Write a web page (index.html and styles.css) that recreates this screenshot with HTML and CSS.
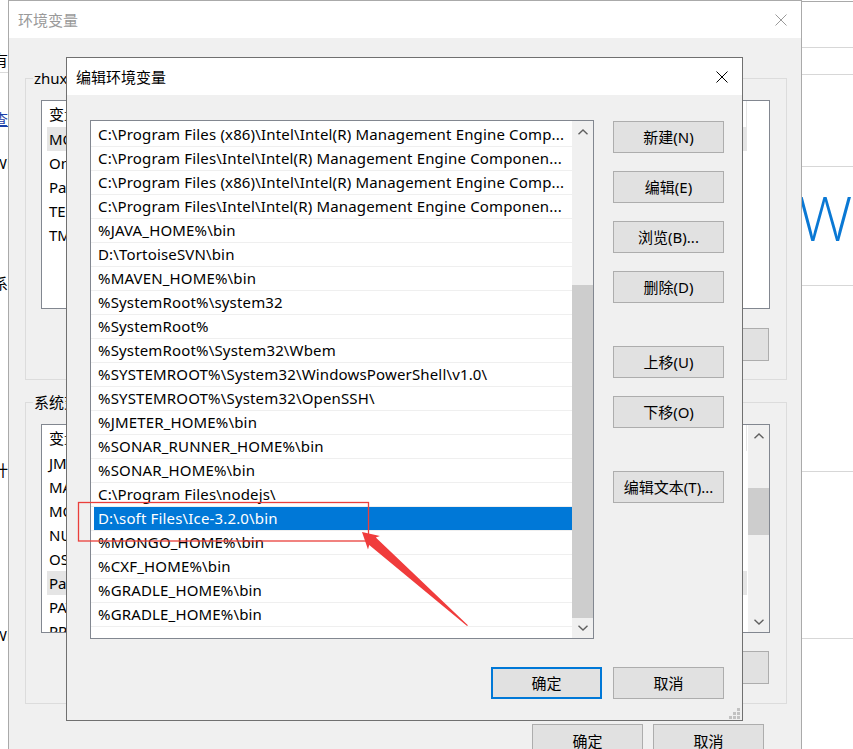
FILE: index.html
```html
<!DOCTYPE html>
<html lang="zh-CN">
<head>
<meta charset="utf-8">
<title>编辑环境变量</title>
<link rel="stylesheet" href="styles.css">
</head>
<body>
<div class="backapp">
  <div class="back-left">
    <div class="bl bl-1">有</div>
    <div class="bl bl-2 link">查</div>
    <div class="bl bl-3">Wi</div>
    <div class="bl bl-4">系</div>
    <div class="bl bl-5">计</div>
    <div class="bl bl-6">Wi</div>
  </div>
  <div class="back-right">
    <div class="br br-1"></div>
    <div class="br br-2"></div>
    <div class="br br-3"></div>
    <div class="br br-4"><span class="brand">Windows</span></div>
    <div class="br br-5"></div>
    <div class="br br-6"></div>
    <div class="br br-7"></div>
  </div>
</div>

<div class="win env">
  <div class="titlebar env-title">
    <span class="title">环境变量</span>
    <svg class="xbtn" width="12" height="12" viewBox="0 0 12 12"><path d="M0.5 0.5L11.5 11.5M11.5 0.5L0.5 11.5" stroke="#9a9a9a" stroke-width="1" fill="none"/></svg>
  </div>
  <div class="env-body">
    <fieldset class="group g1">
      <legend>zhuxiaoming 的用户变量(U)</legend>
      <div class="lv">
        <div class="lv-main">
          <div class="lv-head"><span class="lv-col">变量</span><span class="lv-col2"></span></div>
          <div class="lv-row hl">MOZ_PLUGIN_PATH</div>
          <div class="lv-row">OneDrive</div>
          <div class="lv-row">Path</div>
          <div class="lv-row">TEMP</div>
          <div class="lv-row">TMP</div>
        </div>
      </div>
      <div class="btnrow">
        <button class="btn">新建(N)...</button>
        <button class="btn">编辑(E)...</button>
        <button class="btn">删除(D)</button>
      </div>
    </fieldset>
    <fieldset class="group g2">
      <legend>系统变量(S)</legend>
      <div class="lv">
        <div class="lv-main">
          <div class="lv-head"><span class="lv-col">变量</span><span class="lv-col2"></span></div>
          <div class="lv-row">JMETER_HOME</div>
          <div class="lv-row">MAVEN_HOME</div>
          <div class="lv-row">MONGO_HOME</div>
          <div class="lv-row">NUMBER_OF_PROCESSORS</div>
          <div class="lv-row">OS</div>
          <div class="lv-row hl">Path</div>
          <div class="lv-row">PATHEXT</div>
          <div class="lv-row">PROCESSOR_ARCHITECTURE</div>
        </div>
        <div class="vscroll small">
          <div class="sb-btn up"><svg width="10" height="6" viewBox="0 0 10 6"><path d="M0.5 5.3L5 1L9.5 5.3" stroke="#606060" stroke-width="1.4" fill="none"/></svg></div>
          <div class="sb-gap"></div>
          <div class="sb-thumb"></div>
          <div class="sb-rest"></div>
          <div class="sb-btn down"><svg width="10" height="6" viewBox="0 0 10 6"><path d="M0.5 0.7L5 5L9.5 0.7" stroke="#606060" stroke-width="1.4" fill="none"/></svg></div>
        </div>
      </div>
      <div class="btnrow">
        <button class="btn">新建(W)...</button>
        <button class="btn">编辑(I)...</button>
        <button class="btn">删除(L)</button>
      </div>
    </fieldset>
    <div class="env-foot">
      <button class="btn">确定</button>
      <button class="btn">取消</button>
    </div>
  </div>
</div>

<div class="win dlg">
  <div class="titlebar dlg-title">
    <span class="title">编辑环境变量</span>
    <svg class="xbtn" width="12" height="12" viewBox="0 0 12 12"><path d="M0.5 0.5L11.5 11.5M11.5 0.5L0.5 11.5" stroke="#000" stroke-width="1" fill="none"/></svg>
  </div>
  <div class="dlg-body">
    <div class="dlg-main">
      <div class="pathlist">
        <div class="rows">
          <div class="prow">C:\Program Files (x86)\Intel\Intel(R) Management Engine Comp...</div>
          <div class="prow">C:\Program Files\Intel\Intel(R) Management Engine Componen...</div>
          <div class="prow">C:\Program Files (x86)\Intel\Intel(R) Management Engine Comp...</div>
          <div class="prow">C:\Program Files\Intel\Intel(R) Management Engine Componen...</div>
          <div class="prow">%JAVA_HOME%\bin</div>
          <div class="prow">D:\TortoiseSVN\bin</div>
          <div class="prow">%MAVEN_HOME%\bin</div>
          <div class="prow">%SystemRoot%\system32</div>
          <div class="prow">%SystemRoot%</div>
          <div class="prow">%SystemRoot%\System32\Wbem</div>
          <div class="prow">%SYSTEMROOT%\System32\WindowsPowerShell\v1.0\</div>
          <div class="prow">%SYSTEMROOT%\System32\OpenSSH\</div>
          <div class="prow">%JMETER_HOME%\bin</div>
          <div class="prow">%SONAR_RUNNER_HOME%\bin</div>
          <div class="prow">%SONAR_HOME%\bin</div>
          <div class="prow">C:\Program Files\nodejs\</div>
          <div class="prow sel">D:\soft Files\Ice-3.2.0\bin</div>
          <div class="prow">%MONGO_HOME%\bin</div>
          <div class="prow">%CXF_HOME%\bin</div>
          <div class="prow">%GRADLE_HOME%\bin</div>
          <div class="prow">%GRADLE_HOME%\bin</div>
        </div>
        <div class="vscroll big">
          <div class="sb-btn up"><svg width="10" height="6" viewBox="0 0 10 6"><path d="M0.5 5.3L5 1L9.5 5.3" stroke="#606060" stroke-width="1.4" fill="none"/></svg></div>
          <div class="sb-gap"></div>
          <div class="sb-thumb"></div>
          <div class="sb-btn down"><svg width="10" height="6" viewBox="0 0 10 6"><path d="M0.5 0.7L5 5L9.5 0.7" stroke="#606060" stroke-width="1.4" fill="none"/></svg></div>
        </div>
      </div>
      <div class="sidebtns">
        <button class="btn">新建(N)</button>
        <button class="btn">编辑(E)</button>
        <button class="btn">浏览(B)...</button>
        <button class="btn">删除(D)</button>
        <button class="btn sep">上移(U)</button>
        <button class="btn">下移(O)</button>
        <button class="btn sep">编辑文本(T)...</button>
      </div>
    </div>
    <div class="dlg-foot">
      <button class="btn primary">确定</button>
      <button class="btn">取消</button>
    </div>
  </div>
  <svg class="grip" width="11" height="11" viewBox="0 0 11 11">
    <rect x="8" y="0" width="3" height="3" fill="#c2c2c2"/>
    <rect x="4" y="4" width="3" height="3" fill="#c2c2c2"/>
    <rect x="8" y="4" width="3" height="3" fill="#c2c2c2"/>
    <rect x="0" y="8" width="3" height="3" fill="#c2c2c2"/>
    <rect x="4" y="8" width="3" height="3" fill="#c2c2c2"/>
    <rect x="8" y="8" width="3" height="3" fill="#c2c2c2"/>
  </svg>
</div>

<svg class="annot" width="853" height="749" viewBox="0 0 853 749">
  <rect x="78.5" y="502.5" width="290" height="38.5" fill="none" stroke="#ea3f3b" stroke-width="1.3"/>
  <polygon points="362,532 379.9,535.9 375.8,537.6 467.9,625.2 467.1,626 369.2,545 368,549.4" fill="#f03c3c"/>
</svg>
</body>
</html>
```

FILE: styles.css
```css
* { box-sizing: border-box; }
html, body { margin: 0; padding: 0; }
body {
  width: 853px;
  height: 749px;
  overflow: hidden;
  position: relative;
  background: #ffffff;
  font-family: "Noto Sans", "Noto Sans CJK SC", sans-serif;
  font-size: 15px;
  color: #000;
}

/* ---------- window far behind ---------- */
.backapp { position: absolute; left: 0; top: 0; width: 853px; height: 749px; }
.back-left { position: absolute; left: -7px; top: 0; width: 40px; line-height: 24px; white-space: nowrap; }
.bl { height: 24px; }
.bl-1 { margin-top: 48px; border-bottom: 1px solid #dadada; height: 25px; }
.bl-2 { margin-top: 34px; color: #0645ad; text-decoration: underline; }
.bl-3 { margin-top: 20px; }
.bl-4 { margin-top: 96px; }
.bl-5 { margin-top: 163px; }
.bl-6 { margin-top: 141px; }
.link { color: #1a3fa8; }

.back-right { position: absolute; left: 801px; top: 0; width: 52px; overflow: hidden; }
.br { border-top: 1px solid #d7d7d7; }
.br-1 { margin-top: 1px; height: 46px; border-top-color: #a9a9a9; }
.br-2 { height: 27px; }
.br-3 { height: 92px; }
.br-4 { height: 119px; }
.br-5 { height: 186px; }
.br-6 { height: 167px; }
.br-7 { height: 120px; }
.brand {
  display: block;
  margin-top: 20px;
  margin-left: -3px;
  font-family: "Open Sans", sans-serif;
  font-weight: 300;
  font-size: 61px;
  line-height: 62px;
  color: #0a78d4;
  white-space: nowrap;
}

/* ---------- generic window ---------- */
.win { position: absolute; background: #f0f0f0; }
.titlebar { background: #fff; display: flex; align-items: center; justify-content: space-between; }
.xbtn { display: block; }

.btn {
  font-family: "Noto Sans", "Noto Sans CJK SC", sans-serif;
  font-size: 15px;
  color: #000;
  background: #e1e1e1;
  border: 1px solid #adadad;
  border-radius: 0;
  width: 111px;
  height: 32px;
  padding: 0;
  margin: 0;
  line-height: 30px;
  text-align: center;
}
.btn.primary { border: 2px solid #0078d7; line-height: 28px; }

/* ---------- environment variables window ---------- */
.env { left: 8px; top: 0; width: 794px; height: 770px; border: 1px solid #aaaaaa; }
.env-title { height: 37px; padding: 0 14px 0 9px; }
.env-title .title { color: #9a9a9a; }
.env-body { padding: 30px 14px 0 16px; }

.group {
  margin: 0;
  min-width: 0;
  border: 1px solid #dcdcdc;
  padding: 0 16px 18px 15px;
}
.group legend {
  margin-left: -8px;
  padding: 0 1px;
  line-height: 20px;
  font-size: 15px;
}
.g2 { margin-top: 12px; padding-bottom: 19px; }

.lv {
  margin-top: 12px;
  height: 209px;
  border: 1px solid #828790;
  background: #fff;
  display: flex;
  overflow: hidden;
}
.lv-main { flex: 1; min-width: 0; overflow: hidden; }
.lv-head { height: 26px; display: flex; line-height: 26px; white-space: nowrap; }
.lv-col { width: 705px; flex-shrink: 0; padding-left: 7px; border-right: 1px solid #e5e5e5; }
.lv-col2 { padding-left: 6px; }
.lv-row {
  width: 700px;
  margin-left: 5px;
  height: 24px;
  line-height: 24px;
  padding-left: 2px;
  white-space: nowrap;
}
.lv-row.hl { background: #e5e5e5; }

.btnrow { margin-top: 19px; margin-right: 1px; display: flex; justify-content: flex-end; gap: 10px; }
.btnrow .btn { height: 33px; }
.g2 .btnrow { margin-top: 18px; }

.env-foot { margin-top: 20px; padding-right: 23px; display: flex; justify-content: flex-end; gap: 10px; }
.env-foot .btn { height: 33px; }

/* scrollbars */
.vscroll { width: 21px; flex-shrink: 0; background: #f0f0f0; display: flex; flex-direction: column; }
.sb-btn { height: 21px; flex-shrink: 0; display: flex; align-items: center; justify-content: center; }
.sb-btn svg { display: block; }
.sb-thumb { background: #cdcdcd; flex-shrink: 0; }
.vscroll.small .sb-gap { height: 42px; flex-shrink: 0; }
.vscroll.small .sb-thumb { height: 47px; }
.vscroll.small .sb-rest { flex: 1; }
.vscroll.big .sb-gap { height: 143px; flex-shrink: 0; }
.vscroll.big .sb-thumb { flex: 1; }
.vscroll.big .sb-btn.down { height: 20px; }

/* ---------- edit dialog ---------- */
.dlg { left: 66px; top: 57px; width: 677px; height: 664px; border: 1px solid #707070; }
.dlg-title { height: 37px; padding: 0 14px 0 9px; }
.dlg-body { padding: 25px 17px 0 23px; }
.dlg-main { display: grid; grid-template-columns: 504px 111px; column-gap: 19px; align-items: start; }

.pathlist {
  height: 519px;
  border: 1px solid #828790;
  background: #fff;
  display: flex;
}
.rows { flex: 1; min-width: 0; padding-top: 2px; overflow: hidden; }
.prow {
  height: 24px;
  line-height: 23px;
  padding-left: 7px;
  border-bottom: 1px solid #efefef;
  white-space: nowrap;
  overflow: hidden;
  letter-spacing: 0.16px;
}
.prow.sel {
  color: #fff;
  background: linear-gradient(to right, transparent 3px, #0078d7 3px);
}

.sidebtns { display: flex; flex-direction: column; gap: 18px; padding-top: 1px; }
.sidebtns .btn.sep { margin-top: 25px; }

.dlg-foot { margin-top: 28px; display: flex; justify-content: flex-end; gap: 11px; padding-right: 1px; }

.grip { position: absolute; right: 2px; bottom: 1px; display: block; }

/* ---------- annotation overlay ---------- */
.annot { position: absolute; left: 0; top: 0; pointer-events: none; }
```
